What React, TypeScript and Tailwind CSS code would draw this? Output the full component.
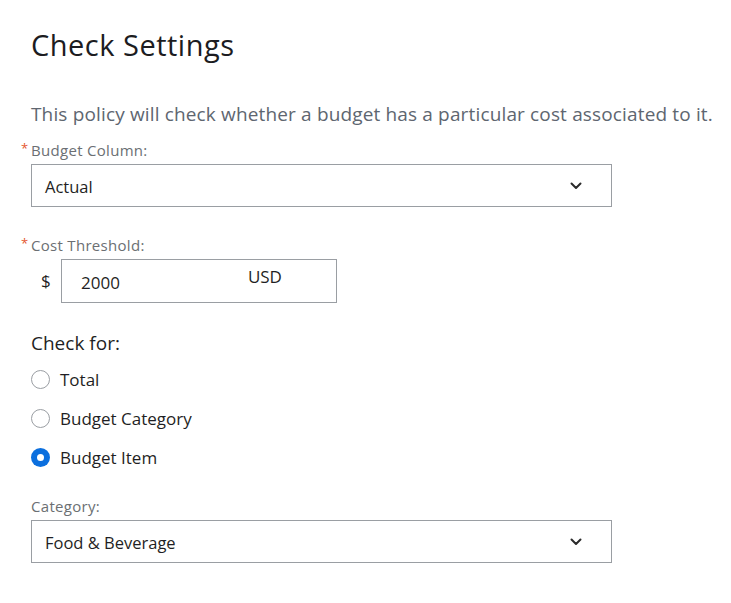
import React from 'react';

function Chevron() {
  return (
    <svg width="12" height="8" viewBox="0 0 12 8" className="shrink-0 -mt-[2px]">
      <path d="M1.5 1.5 L6 6 L10.5 1.5" fill="none" stroke="#2b2b2b" strokeWidth="2" strokeLinecap="round" strokeLinejoin="round" />
    </svg>
  );
}

function Label({ text, required }: { text: string; required?: boolean }) {
  return (
    <div className="relative text-[15px] leading-[18px] text-[#6b6f73] tracking-[0.3px]">
      {required && <span className="absolute -left-[10px] top-[-2px] text-[13px] text-[#e4572e]">*</span>}
      {text}
    </div>
  );
}

function Select({ value }: { value: string }) {
  return (
    <div className="w-[581px] h-[43px] border border-[#9a9ea3] flex items-center justify-between pt-[3px] pl-[13px] pr-[29px] text-[16.5px] text-[#1f1f24]">
      <span>{value}</span>
      <Chevron />
    </div>
  );
}

function Radio({ label, checked }: { label: string; checked?: boolean }) {
  return (
    <div className="flex items-center gap-[10px] h-[19px]">
      {checked ? (
        <span className="w-[19px] h-[19px] rounded-full bg-[#0b6fde] flex items-center justify-center">
          <span className="w-[7px] h-[7px] rounded-full bg-white" />
        </span>
      ) : (
        <span className="w-[19px] h-[19px] rounded-full border border-[#9a9ea3] bg-white" />
      )}
      <span className="text-[17px] text-[#1f1f24]">{label}</span>
    </div>
  );
}

export default function App() {
  return (
    <div className="w-[731px] h-[603px] bg-white pl-[31px] pt-[28px]" style={{ fontFamily: '"Open Sans", Roboto, sans-serif' }}>
      <h1 className="text-[29px] leading-[34px] text-[#1c1c21] tracking-[0.5px]">Check Settings</h1>

      <p className="mt-[40px] text-[19px] leading-[24px] text-[#5e6670] tracking-[0.15px]">
        This policy will check whether a budget has a particular cost associated to it.
      </p>

      <div className="mt-[15px]">
        <Label text="Budget Column:" required />
        <div className="mt-[5px]">
          <Select value="Actual" />
        </div>
      </div>

      <div className="mt-[29px]">
        <Label text="Cost Threshold:" required />
        <div className="mt-[5px] flex items-center">
          <span className="w-[30px] pl-[10px] text-[17px] text-[#1f1f24]">$</span>
          <div className="w-[276px] h-[44px] border border-[#9a9ea3] flex pl-[19px] text-[17px] text-[#1f1f24]">
            <span className="mt-[10px]">2000</span>
            <span className="ml-[128px] mt-[4px]">USD</span>
          </div>
        </div>
      </div>

      <div className="mt-[28px] text-[19px] leading-[24px] text-[#1f1f24]">Check for:</div>
      <div className="mt-[15px] flex flex-col gap-[20px]">
        <Radio label="Total" />
        <Radio label="Budget Category" />
        <Radio label="Budget Item" checked />
      </div>

      <div className="mt-[30px]">
        <Label text="Category:" />
        <div className="mt-[5px]">
          <Select value="Food & Beverage" />
        </div>
      </div>
    </div>
  );
}
